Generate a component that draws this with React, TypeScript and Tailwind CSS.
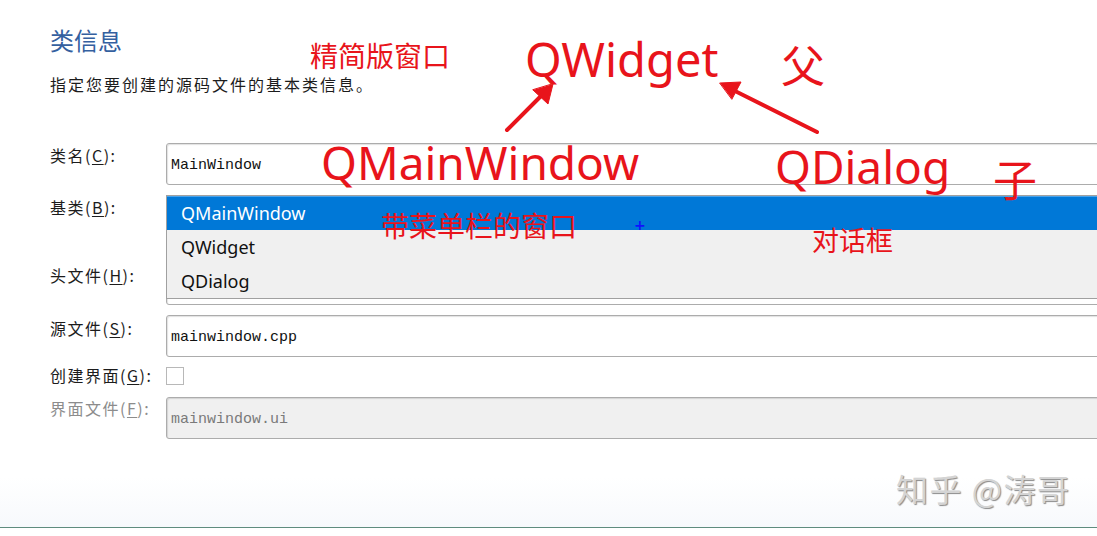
import React from 'react';

const cjk = "font-['Noto_Sans_CJK_SC',sans-serif]";
const mono = "font-['Liberation_Mono','Noto_Sans_CJK_SC',monospace]";
const ann = "font-['Noto_Sans','Noto_Sans_CJK_SC',sans-serif]";

function Label({ text, hot, disabled }: { text: string; hot: string; disabled?: boolean }) {
    return (
        <span className={`${cjk} text-[16px] leading-[20px] tracking-[1.5px] ${disabled ? 'text-[#8c8c8c]' : 'text-[#1c1c1c]'}`}>
            {text}(<span className="underline underline-offset-2">{hot}</span>):
        </span>
    );
}

function Field({ value, disabled }: { value?: string; disabled?: boolean }) {
    return (
        <div
            className={`shrink-0 h-[42px] w-[960px] flex items-center pl-[4px] pt-[5px] rounded-[3px] border border-[#acacac] shadow-[inset_1px_1px_1px_rgba(0,0,0,0.12)] ${disabled ? 'bg-[#f0f0f0]' : 'bg-white'}`}
        >
            <span className={`${mono} text-[15px] ${disabled ? 'text-[#7a7a7a]' : 'text-[#111]'}`}>{value}</span>
        </div>
    );
}

export default function App() {
    const items = ['QMainWindow', 'QWidget', 'QDialog'];

    return (
        <div className="relative w-[1097px] h-[536px] overflow-hidden bg-white">
            <div className="absolute left-0 right-0 bottom-[9px] h-[50px] bg-gradient-to-b from-white to-[#f7f9fc]" />

            {/* form */}
            <div className="relative pl-[50px] pt-[27px]">
                <h2 className={`${cjk} text-[24px] leading-[26px] text-[#34609f]`}>类信息</h2>
                <p className={`${cjk} mt-[21px] text-[16px] leading-[20px] tracking-[2px] text-[#1c1c1c]`}>
                    指定您要创建的源码文件的基本类信息。
                </p>

                <div className="mt-[49px] flex flex-col">
                    <div className="flex">
                        <div className="shrink-0 w-[116px] pt-[1px]"><Label text="类名" hot="C" /></div>
                        <Field value="MainWindow" />
                    </div>
                    <div className="flex mt-[10px]">
                        <div className="shrink-0 w-[116px] pt-[1px]"><Label text="基类" hot="B" /></div>
                        <Field />
                    </div>
                    <div className="flex mt-[26px]">
                        <div className="shrink-0 w-[116px] pt-[1px]"><Label text="头文件" hot="H" /></div>
                        <Field />
                    </div>
                    <div className="flex mt-[10px]">
                        <div className="shrink-0 w-[116px] pt-[2px]"><Label text="源文件" hot="S" /></div>
                        <Field value="mainwindow.cpp" />
                    </div>
                    <div className="flex items-center h-[18px] mt-[10px]">
                        <div className="shrink-0 w-[116px]"><Label text="创建界面" hot="G" /></div>
                        <div className="shrink-0 w-[18px] h-[18px] border border-[#b8b8b8] bg-white" />
                    </div>
                    <div className="flex mt-[12px]">
                        <div className="shrink-0 w-[116px] pt-0"><Label text="界面文件" hot="F" disabled /></div>
                        <Field value="mainwindow.ui" disabled />
                    </div>
                </div>
            </div>

            {/* open combo popup */}
            <div className="absolute left-[166px] top-[195px] w-[960px] h-[104px] border border-[#a0a0a0] bg-[#f0f0f0]">
                {items.map((item, i) => (
                    <div
                        key={item}
                        className={`${ann} h-[34px] flex items-center pl-[14px] text-[18px] ${i === 0 ? 'bg-[#0078d7] text-white border-t border-[#4aa3ea]' : 'text-[#111]'}`}
                    >
                        {item}
                    </div>
                ))}
            </div>

            {/* red annotations */}
            <div className={`${cjk} absolute left-[310px] top-[41px] text-[28px] leading-none text-[#e8141b]`}>精简版窗口</div>
            <div className={`${ann} absolute left-[525px] top-[36px] text-[47px] leading-none text-[#e8141b]`}>QWidget</div>
            <div className={`${cjk} absolute left-[781px] top-[42px] text-[44px] leading-none text-[#e8141b]`}>父</div>
            <div className={`${ann} absolute left-[321px] top-[139px] text-[46px] leading-none text-[#e8141b]`}>QMainWindow</div>
            <div className={`${ann} absolute left-[775px] top-[143px] text-[46px] leading-none text-[#e8141b]`}>QDialog</div>
            <div className={`${cjk} absolute left-[993px] top-[156px] text-[44px] leading-none text-[#e8141b]`}>子</div>
            <div className={`${cjk} absolute left-[381px] top-[211px] text-[28px] leading-none text-[#e8141b]`}>带菜单栏的窗口</div>
            <div className={`${cjk} absolute left-[812px] top-[226px] text-[27px] leading-none text-[#e8141b]`}>对话框</div>
            <div className="absolute left-[634px] top-[218px] text-[14px] font-bold leading-none text-[#1010ff] font-['DejaVu_Sans',sans-serif]">+</div>

            <svg className="absolute inset-0 pointer-events-none" width="1097" height="536" viewBox="0 0 1097 536">
                <g stroke="#e8141b" strokeWidth="4" strokeLinecap="round" fill="#e8141b">
                    <line x1="507" y1="130" x2="541" y2="96" />
                    <polygon points="553,84 548,104 533,90" strokeWidth="1" strokeLinejoin="round" />
                    <line x1="817" y1="132" x2="735" y2="91" />
                    <polygon points="720,83 741,82 732,99" strokeWidth="1" strokeLinejoin="round" />
                </g>
            </svg>

            {/* watermark */}
            <div className={`${cjk} absolute left-[896px] top-[472px] text-[32px] leading-none tracking-[1.5px] text-[#d4d4d4] [text-shadow:1px_1px_1px_#8a8a8a]`}>
                知乎 @涛哥
            </div>

            <div className="absolute left-0 right-0 top-[527px] h-px bg-[#5f8c7e]" />
            <div className="absolute left-0 right-0 top-[528px] bottom-0 bg-white" />
        </div>
    );
}
